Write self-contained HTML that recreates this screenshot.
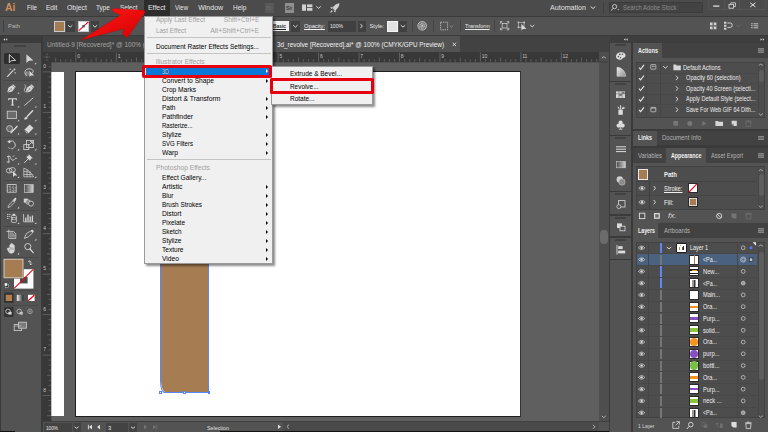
<!DOCTYPE html>
<html lang="en"><head><meta charset="utf-8"><title>Adobe Illustrator - Effect &gt; 3D &gt; Revolve</title>
<style>
html,body{margin:0;padding:0;background:#535353;}
body{width:768px;height:432px;overflow:hidden;position:relative;font-family:"Liberation Sans",sans-serif;}
#app{position:absolute;left:0;top:0;width:768px;height:432px;overflow:hidden;background:#535353;}
#app div{position:absolute;box-sizing:border-box;}
#app svg{position:absolute;left:0;top:0;}
.t{position:absolute;white-space:nowrap;}
</style></head><body><div id="app">
<div style="left:0px;top:0px;width:768px;height:16px;background:#4b4b4b;"></div>
<div style="left:0px;top:16px;width:768px;height:1px;background:#3a3a3a;"></div>
<div style="left:144px;top:0px;width:26px;height:16px;background:#2d2d2d;"></div>
<span class="t" style="top:0px;font-size:11px;line-height:14px;color:#cf8d5c;font-weight:bold;left:5.00px;transform-origin:0 50%;transform:scaleX(0.945);">Ai</span>
<span class="t" style="top:3px;font-size:7px;line-height:9px;color:#e4e4e4;left:26.80px;transform-origin:0 50%;transform:scaleX(0.887);">File</span>
<span class="t" style="top:3px;font-size:7px;line-height:9px;color:#e4e4e4;left:46.20px;transform-origin:0 50%;transform:scaleX(0.937);">Edit</span>
<span class="t" style="top:3px;font-size:7px;line-height:9px;color:#e4e4e4;left:67.00px;transform-origin:0 50%;transform:scaleX(0.979);">Object</span>
<span class="t" style="top:3px;font-size:7px;line-height:9px;color:#e4e4e4;left:96.20px;transform-origin:0 50%;transform:scaleX(0.909);">Type</span>
<span class="t" style="top:3px;font-size:7px;line-height:9px;color:#e4e4e4;left:120.00px;transform-origin:0 50%;transform:scaleX(0.900);">Select</span>
<span class="t" style="top:3px;font-size:7px;line-height:9px;color:#e4e4e4;left:147.50px;transform-origin:0 50%;transform:scaleX(0.985);">Effect</span>
<span class="t" style="top:3px;font-size:7px;line-height:9px;color:#e4e4e4;left:174.50px;transform-origin:0 50%;transform:scaleX(0.864);">View</span>
<span class="t" style="top:3px;font-size:7px;line-height:9px;color:#e4e4e4;left:198.20px;transform-origin:0 50%;">Window</span>
<span class="t" style="top:3px;font-size:7px;line-height:9px;color:#e4e4e4;left:233.20px;transform-origin:0 50%;transform:scaleX(0.924);">Help</span>
<div style="left:264.5px;top:3px;width:9px;height:9.5px;background:#585858;"></div>
<span class="t" style="top:4px;font-size:5.5px;line-height:8px;color:#6a6a6a;left:266.00px;transform-origin:0 50%;transform:scaleX(1.091);">Br</span>
<div style="left:284.5px;top:3px;width:9px;height:9.5px;background:#8e8e8e;"></div>
<span class="t" style="top:4px;font-size:5.5px;line-height:8px;color:#3c3c3c;font-weight:bold;left:286.00px;transform-origin:0 50%;transform:scaleX(1.091);">St</span>
<span class="t" style="top:3px;font-size:7px;line-height:9px;color:#e0e0e0;left:550.00px;transform-origin:0 50%;transform:scaleX(1.017);">Automation</span>
<div style="left:603px;top:3px;width:1px;height:10px;background:#3e3e3e;"></div>
<div style="left:608.5px;top:2px;width:94.5px;height:10.5px;background:#434343;border:1px solid #3c3c3c;border-radius:1px;"></div>
<span class="t" style="top:3px;font-size:6.5px;line-height:9px;color:#8c8c8c;left:623.00px;transform-origin:0 50%;transform:scaleX(0.908);">Search Adobe Stock</span>
<div style="left:0px;top:17px;width:768px;height:18px;background:#535353;"></div>
<div style="left:0px;top:35px;width:768px;height:1px;background:#3a3a3a;"></div>
<div style="left:3px;top:20px;width:1px;height:12px;background:#3f3f3f;"></div>
<span class="t" style="top:22px;font-size:6px;line-height:8px;color:#b8b8b8;left:8.00px;transform-origin:0 50%;transform:scaleX(0.972);">Path</span>
<div style="left:53.5px;top:21px;width:11px;height:10.5px;background:#a67c52;border:1px solid #c9c9c9;"></div>
<div style="left:66px;top:21px;width:8.5px;height:10.5px;background:#404040;"></div>
<div style="left:78px;top:21px;width:11px;height:10.5px;background:#fff;border:1px solid #c9c9c9;"></div>
<div style="left:91px;top:21px;width:8px;height:10.5px;background:#404040;"></div>
<div style="left:272px;top:21px;width:17px;height:10px;background:#f0f0f0;"></div>
<span class="t" style="top:22px;font-size:5.5px;line-height:8px;color:#222;font-weight:bold;left:273.00px;transform-origin:0 50%;transform:scaleX(0.886);text-decoration:underline;">Basic</span>
<div style="left:291px;top:20.5px;width:9px;height:11px;background:#404040;"></div>
<span class="t" style="top:22px;font-size:5.8px;line-height:8px;color:#f0f0f0;left:303.50px;transform-origin:0 50%;transform:scaleX(0.987);text-decoration:underline;">Opacity:</span>
<div style="left:328px;top:20.5px;width:28px;height:11px;background:#404040;"></div>
<span class="t" style="top:22px;font-size:5.8px;line-height:8px;color:#e8e8e8;left:330.00px;transform-origin:0 50%;transform:scaleX(0.876);">100%</span>
<div style="left:357.5px;top:20.5px;width:8px;height:11px;background:#404040;"></div>
<span class="t" style="top:22px;font-size:5.8px;line-height:8px;color:#e8e8e8;left:369.50px;transform-origin:0 50%;">Style:</span>
<div style="left:386.5px;top:21px;width:11.5px;height:10.5px;background:#e2e2e2;border:1px solid #f4f4f4;"></div>
<div style="left:399px;top:21px;width:8px;height:10.5px;background:#404040;"></div>
<div style="left:411.5px;top:20px;width:1px;height:12px;background:#444;"></div>
<div style="left:433px;top:20px;width:1px;height:12px;background:#444;"></div>
<div style="left:459.5px;top:20px;width:1px;height:12px;background:#444;"></div>
<span class="t" style="top:22px;font-size:5.8px;line-height:8px;color:#e8e8e8;left:464.80px;transform-origin:0 50%;transform:scaleX(0.942);text-decoration:underline;">Transform</span>
<div style="left:494px;top:20px;width:1px;height:12px;background:#444;"></div>
<div style="left:0px;top:36px;width:768px;height:16px;background:#424242;"></div>
<div style="left:0px;top:36px;width:41px;height:7px;background:#3c3c3c;"></div>
<div style="left:270px;top:36px;width:190px;height:16.5px;background:#535353;"></div>
<div style="left:42px;top:36px;width:1px;height:16px;background:#383838;"></div>
<span class="t" style="top:40px;font-size:6.5px;line-height:9px;color:#a2a2a2;left:47.00px;transform-origin:0 50%;">Untitled-9 [Recovered]* @ 100% (CMYK/GPU Preview)</span>
<span class="t" style="top:40px;font-size:6.5px;line-height:9px;color:#f2f2f2;left:276.50px;transform-origin:0 50%;transform:scaleX(0.979);">3d_revolve [Recovered].ai* @ 100% (CMYK/GPU Preview)</span>
<div style="left:0px;top:43px;width:41px;height:389px;background:#535353;"></div>
<div style="left:0px;top:36px;width:1px;height:396px;background:#3a3a3a;"></div>
<div style="left:41px;top:36px;width:1.5px;height:396px;background:#3a3a3a;"></div>
<div style="left:14px;top:44.6px;width:12px;height:2px;background:#424242;"></div>
<div style="left:4px;top:52.5px;width:15.5px;height:11.5px;background:#2e2e2e;border-radius:1.5px;"></div>
<div style="left:3px;top:80px;width:35px;height:0.8px;background:#484848;"></div>
<div style="left:3px;top:136.5px;width:35px;height:0.8px;background:#484848;"></div>
<div style="left:3px;top:180px;width:35px;height:0.8px;background:#484848;"></div>
<div style="left:3px;top:210px;width:35px;height:0.8px;background:#484848;"></div>
<div style="left:3px;top:226px;width:35px;height:0.8px;background:#484848;"></div>
<div style="left:3px;top:256.8px;width:35px;height:0.8px;background:#484848;"></div>
<div style="left:3px;top:290.3px;width:35px;height:0.8px;background:#484848;"></div>
<div style="left:3px;top:305px;width:35px;height:0.8px;background:#484848;"></div>
<div style="left:42.5px;top:52px;width:556.5px;height:10px;background:#383838;"></div>
<div style="left:42.5px;top:52px;width:8.5px;height:369px;background:#383838;"></div>
<div style="left:51px;top:62px;width:548px;height:359px;background:#5f5f5f;"></div>
<div style="left:50.8px;top:71.5px;width:13.2px;height:344.5px;background:#fff;"></div>
<div style="left:75.2px;top:71px;width:445.8px;height:345.5px;background:#fff;border:1px solid #1e1e1e;border-right-color:#333;"></div>
<div style="left:599px;top:52px;width:9.5px;height:369px;background:#4e4e4e;"></div>
<div style="left:600px;top:229.5px;width:8px;height:14px;background:#6c6c6c;border-radius:4px;"></div>
<div style="left:42.5px;top:421px;width:566px;height:11px;background:#535353;"></div>
<div style="left:42.5px;top:420.5px;width:566px;height:1px;background:#404040;"></div>
<div style="left:43.5px;top:422.5px;width:28.5px;height:9.5px;background:#434343;"></div>
<div style="left:72.8px;top:422.5px;width:8px;height:9.5px;background:#434343;"></div>
<div style="left:106px;top:422.5px;width:22px;height:9.5px;background:#434343;"></div>
<div style="left:129px;top:422.5px;width:8px;height:9.5px;background:#434343;"></div>
<span class="t" style="top:424px;font-size:5.8px;line-height:8px;color:#e8e8e8;left:46.00px;transform-origin:0 50%;transform:scaleX(0.809);">100%</span>
<span class="t" style="top:424px;font-size:5.8px;line-height:8px;color:#e8e8e8;left:108.00px;transform-origin:0 50%;">3</span>
<span class="t" style="top:424px;font-size:5.8px;line-height:8px;color:#e0e0e0;left:207.00px;transform-origin:0 50%;transform:scaleX(0.922);">Selection</span>
<div style="left:283px;top:422px;width:316px;height:9px;background:#4a4a4a;"></div>
<div style="left:220px;top:430.5px;width:548px;height:1.5px;background:#111;"></div>
<div style="left:0px;top:430.5px;width:15px;height:1.5px;background:#111;"></div>
<div style="left:160.8px;top:250px;width:48px;height:142.3px;background:#a67c52;border-radius:0 0 0 4.5px/0 0 0 12px;"></div>
<div style="left:160.2px;top:250px;width:49px;height:142.7px;background:transparent;border:0.7px solid #5585ff;border-radius:0 0 0 4.5px/0 0 0 12px;"></div>
<div style="left:159.20000000000002px;top:391.2px;width:2.6px;height:2.6px;background:#fff;border:0.6px solid #4f80ff;"></div>
<div style="left:183.4px;top:391.2px;width:2.6px;height:2.6px;background:#fff;border:0.6px solid #4f80ff;"></div>
<div style="left:207.70000000000002px;top:391.2px;width:2.6px;height:2.6px;background:#fff;border:0.6px solid #4f80ff;"></div>
<div style="left:608.5px;top:36px;width:159.5px;height:396px;background:#3a3a3a;"></div>
<div style="left:609px;top:36px;width:159px;height:6.5px;background:#3e3e3e;"></div>
<div style="left:610px;top:43px;width:21px;height:37.5px;background:#535353;"></div>
<div style="left:615px;top:44.3px;width:11px;height:2px;background:#414141;"></div>
<div style="left:610px;top:82px;width:21px;height:52.5px;background:#535353;"></div>
<div style="left:615px;top:83.3px;width:11px;height:2px;background:#414141;"></div>
<div style="left:610px;top:136px;width:21px;height:54.5px;background:#535353;"></div>
<div style="left:615px;top:137.3px;width:11px;height:2px;background:#414141;"></div>
<div style="left:610px;top:192px;width:21px;height:21.5px;background:#535353;"></div>
<div style="left:615px;top:193.3px;width:11px;height:2px;background:#414141;"></div>
<div style="left:610px;top:215.5px;width:21px;height:20.0px;background:#535353;"></div>
<div style="left:615px;top:216.8px;width:11px;height:2px;background:#414141;"></div>
<div style="left:610px;top:237.5px;width:21px;height:21.0px;background:#535353;"></div>
<div style="left:615px;top:238.8px;width:11px;height:2px;background:#414141;"></div>
<div style="left:610px;top:260px;width:21px;height:172px;background:#535353;"></div>
<div style="left:633px;top:43px;width:135px;height:14.5px;background:#424242;"></div>
<div style="left:633px;top:43px;width:29px;height:15px;background:#535353;"></div>
<span class="t" style="top:46px;font-size:6.5px;line-height:9px;color:#f0f0f0;font-weight:bold;left:637.50px;transform-origin:0 50%;transform:scaleX(0.839);">Actions</span>
<div style="left:633px;top:57.5px;width:135px;height:71.5px;background:#535353;"></div>
<div style="left:758px;top:48px;width:5.6px;height:4.6px;background:#858585;"></div>
<div style="left:758px;top:49.3px;width:5.6px;height:0.5px;background:#6a6a6a;"></div>
<div style="left:758px;top:50.9px;width:5.6px;height:0.5px;background:#6a6a6a;"></div>
<div style="left:633px;top:130.5px;width:135px;height:14.5px;background:#424242;"></div>
<div style="left:633px;top:130.5px;width:23.5px;height:15px;background:#535353;"></div>
<span class="t" style="top:133px;font-size:6.5px;line-height:9px;color:#f0f0f0;font-weight:bold;left:637.50px;transform-origin:0 50%;transform:scaleX(0.825);">Links</span>
<span class="t" style="top:133px;font-size:6.5px;line-height:9px;color:#b4b4b4;left:661.50px;transform-origin:0 50%;transform:scaleX(0.923);">Document Info</span>
<div style="left:758px;top:135.5px;width:5.6px;height:4.6px;background:#858585;"></div>
<div style="left:758px;top:136.8px;width:5.6px;height:0.5px;background:#6a6a6a;"></div>
<div style="left:758px;top:138.4px;width:5.6px;height:0.5px;background:#6a6a6a;"></div>
<div style="left:633px;top:148px;width:135px;height:14.5px;background:#424242;"></div>
<span class="t" style="top:151px;font-size:6.5px;line-height:9px;color:#b4b4b4;left:637.50px;transform-origin:0 50%;transform:scaleX(0.902);">Variables</span>
<div style="left:666px;top:148px;width:39.5px;height:15px;background:#535353;"></div>
<span class="t" style="top:151px;font-size:6.5px;line-height:9px;color:#f0f0f0;font-weight:bold;left:670.50px;transform-origin:0 50%;transform:scaleX(0.820);">Appearance</span>
<span class="t" style="top:151px;font-size:6.5px;line-height:9px;color:#b4b4b4;left:711.00px;transform-origin:0 50%;transform:scaleX(0.868);">Asset Export</span>
<div style="left:633px;top:162.5px;width:135px;height:60.0px;background:#535353;"></div>
<div style="left:758px;top:153px;width:5.6px;height:4.6px;background:#858585;"></div>
<div style="left:758px;top:154.3px;width:5.6px;height:0.5px;background:#6a6a6a;"></div>
<div style="left:758px;top:155.9px;width:5.6px;height:0.5px;background:#6a6a6a;"></div>
<div style="left:633px;top:223px;width:135px;height:14.5px;background:#424242;"></div>
<div style="left:633px;top:223px;width:24.5px;height:15px;background:#535353;"></div>
<span class="t" style="top:226px;font-size:6.5px;line-height:9px;color:#f0f0f0;font-weight:bold;left:637.50px;transform-origin:0 50%;transform:scaleX(0.811);">Layers</span>
<span class="t" style="top:226px;font-size:6.5px;line-height:9px;color:#b4b4b4;left:663.50px;transform-origin:0 50%;transform:scaleX(0.923);">Artboards</span>
<div style="left:633px;top:237.5px;width:135px;height:194.5px;background:#535353;"></div>
<div style="left:758px;top:228px;width:5.6px;height:4.6px;background:#858585;"></div>
<div style="left:758px;top:229.3px;width:5.6px;height:0.5px;background:#6a6a6a;"></div>
<div style="left:758px;top:230.9px;width:5.6px;height:0.5px;background:#6a6a6a;"></div>
<div style="left:636px;top:61.5px;width:128.5px;height:56px;background:#4d4d4d;border:1px solid #424242;"></div>
<div style="left:636px;top:72.5px;width:121px;height:0.8px;background:#484848;"></div>
<div style="left:636px;top:83.10000000000001px;width:121px;height:0.8px;background:#484848;"></div>
<div style="left:636px;top:93.7px;width:121px;height:0.8px;background:#484848;"></div>
<div style="left:636px;top:104.30000000000001px;width:121px;height:0.8px;background:#484848;"></div>
<div style="left:646.3px;top:61.5px;width:0.8px;height:56px;background:#454545;"></div>
<div style="left:659.5px;top:61.5px;width:0.8px;height:56px;background:#454545;"></div>
<div style="left:757.5px;top:61.5px;width:0.8px;height:56px;background:#454545;"></div>
<div style="left:758.5px;top:70px;width:5px;height:12px;background:#5e5e5e;border-radius:2.5px;"></div>
<span class="t" style="top:63px;font-size:6.3px;line-height:9px;color:#ececec;left:683.00px;transform-origin:0 50%;transform:scaleX(0.892);">Default Actions</span>
<span class="t" style="top:73px;font-size:6.3px;line-height:9px;color:#ececec;left:685.50px;transform-origin:0 50%;transform:scaleX(0.895);">Opacity 60 (selection)</span>
<span class="t" style="top:84px;font-size:6.3px;line-height:9px;color:#ececec;left:685.50px;transform-origin:0 50%;transform:scaleX(0.882);">Opacity 40 Screen (selecti...</span>
<span class="t" style="top:94px;font-size:6.3px;line-height:9px;color:#ececec;left:685.50px;transform-origin:0 50%;transform:scaleX(0.882);">Apply Default Style (select...</span>
<span class="t" style="top:105px;font-size:6.3px;line-height:9px;color:#ececec;left:685.50px;transform-origin:0 50%;transform:scaleX(0.876);">Save For Web GIF 64 Dith...</span>
<div style="left:636px;top:166px;width:128.5px;height:43.5px;background:#4d4d4d;border:1px solid #424242;"></div>
<div style="left:636px;top:181px;width:121px;height:0.8px;background:#454545;"></div>
<div style="left:636px;top:195px;width:121px;height:0.8px;background:#454545;"></div>
<div style="left:757.5px;top:166px;width:0.8px;height:43.5px;background:#454545;"></div>
<div style="left:758.5px;top:174px;width:5px;height:22px;background:#5e5e5e;border-radius:2.5px;"></div>
<div style="left:649.3px;top:182px;width:0.8px;height:27px;background:#3e3e3e;"></div>
<div style="left:637.5px;top:169px;width:10.5px;height:10.5px;background:#a67c52;border:1px solid #e8e8e8;"></div>
<span class="t" style="top:170px;font-size:6.3px;line-height:9px;color:#f0f0f0;font-weight:bold;left:664.00px;transform-origin:0 50%;transform:scaleX(0.952);">Path</span>
<span class="t" style="top:184px;font-size:6.3px;line-height:9px;color:#f0f0f0;left:663.50px;transform-origin:0 50%;transform:scaleX(0.927);text-decoration:underline;">Stroke:</span>
<span class="t" style="top:198px;font-size:6.3px;line-height:9px;color:#f0f0f0;left:663.50px;transform-origin:0 50%;transform:scaleX(0.970);">Fill:</span>
<span class="t" style="top:211px;font-size:7px;line-height:9px;color:#dcdcdc;left:668.00px;transform-origin:0 50%;transform:scaleX(1.150);font-style:italic;">fx.</span>
<div style="left:688px;top:183px;width:9.5px;height:10px;background:#fff;border:1px solid #2a2a2a;"></div>
<div style="left:688px;top:197px;width:9.5px;height:10px;background:#a67c52;border:1px solid #2a2a2a;box-shadow:inset 0 0 0 1px #d9d9d9;"></div>
<div style="left:636px;top:241.7px;width:128.5px;height:176.5px;background:#4d4d4d;border:1px solid #424242;"></div>
<div style="left:636.5px;top:253.48px;width:120.5px;height:11.78px;background:#4a6180;"></div>
<div style="left:636px;top:253.48px;width:121px;height:0.8px;background:#484848;"></div>
<div style="left:636px;top:265.26px;width:121px;height:0.8px;background:#484848;"></div>
<div style="left:636px;top:277.03999999999996px;width:121px;height:0.8px;background:#484848;"></div>
<div style="left:636px;top:288.82px;width:121px;height:0.8px;background:#484848;"></div>
<div style="left:636px;top:300.59999999999997px;width:121px;height:0.8px;background:#484848;"></div>
<div style="left:636px;top:312.38px;width:121px;height:0.8px;background:#484848;"></div>
<div style="left:636px;top:324.15999999999997px;width:121px;height:0.8px;background:#484848;"></div>
<div style="left:636px;top:335.94px;width:121px;height:0.8px;background:#484848;"></div>
<div style="left:636px;top:347.71999999999997px;width:121px;height:0.8px;background:#484848;"></div>
<div style="left:636px;top:359.5px;width:121px;height:0.8px;background:#484848;"></div>
<div style="left:636px;top:371.28px;width:121px;height:0.8px;background:#484848;"></div>
<div style="left:636px;top:383.05999999999995px;width:121px;height:0.8px;background:#484848;"></div>
<div style="left:636px;top:394.84px;width:121px;height:0.8px;background:#484848;"></div>
<div style="left:636px;top:406.62px;width:121px;height:0.8px;background:#484848;"></div>
<div style="left:647.5px;top:241.7px;width:0.8px;height:176.5px;background:#454545;"></div>
<div style="left:737.3px;top:241.7px;width:0.8px;height:176.5px;background:#454545;"></div>
<div style="left:757.5px;top:241.7px;width:0.8px;height:176.5px;background:#454545;"></div>
<div style="left:758.5px;top:252px;width:5px;height:128px;background:#5e5e5e;border-radius:2.5px;"></div>
<div style="left:660.3px;top:242.89999999999998px;width:1.6px;height:10.18px;background:#5f86f2;"></div>
<div style="left:676px;top:242.78999999999996px;width:10.5px;height:10px;background:#fff;border:1px solid #1e1e1e;border-radius:1px;"></div>
<div style="left:679px;top:246.78999999999996px;width:1px;height:3px;background:#c98a4a;"></div>
<div style="left:681.5px;top:247.28999999999996px;width:1.2px;height:3px;background:#555;"></div>
<div style="left:683.2px;top:246.28999999999996px;width:1.2px;height:4px;background:#333;"></div>
<div style="left:680px;top:245.18999999999997px;width:1px;height:1px;background:#e0a030;"></div>
<span class="t" style="top:243px;font-size:6.3px;line-height:9px;color:#f0f0f0;left:689.50px;transform-origin:0 50%;transform:scaleX(0.857);">Layer 1</span>
<div style="left:660.3px;top:254.68px;width:1.6px;height:10.18px;background:#767676;"></div>
<div style="left:689.3px;top:254.57px;width:10px;height:10px;background:#fff;border:0.8px solid #2a2a2a;"></div>
<span class="t" style="top:255px;font-size:6.3px;line-height:9px;color:#f0f0f0;left:702.50px;transform-origin:0 50%;transform:scaleX(0.842);">&lt;Pa...</span>
<div style="left:693.6999999999999px;top:255.37px;width:1.1px;height:8.4px;background:#a67c52;"></div>
<div style="left:660.3px;top:266.46px;width:1.6px;height:10.18px;background:#5f86f2;"></div>
<div style="left:689.3px;top:266.34999999999997px;width:10px;height:10px;background:#fff;border:0.8px solid #2a2a2a;"></div>
<span class="t" style="top:267px;font-size:6.3px;line-height:9px;color:#f0f0f0;left:702.50px;transform-origin:0 50%;transform:scaleX(0.914);">New...</span>
<div style="left:690.0999999999999px;top:268.75px;width:8.4px;height:2px;background:#1a1a1a;"></div>
<div style="left:690.0999999999999px;top:272.54999999999995px;width:8.4px;height:1.6px;background:#1a1a1a;"></div>
<div style="left:691.5999999999999px;top:269.75px;width:5px;height:1px;background:#e0a030;"></div>
<div style="left:660.3px;top:278.23999999999995px;width:1.6px;height:10.18px;background:#5f86f2;"></div>
<div style="left:689.3px;top:278.12999999999994px;width:10px;height:10px;background:#fff;border:0.8px solid #2a2a2a;"></div>
<span class="t" style="top:279px;font-size:6.3px;line-height:9px;color:#f0f0f0;left:702.50px;transform-origin:0 50%;transform:scaleX(0.842);">&lt;Pa...</span>
<div style="left:692.0999999999999px;top:279.92999999999995px;width:4.4px;height:7.4px;background:#9a9a9a;"></div>
<div style="left:693.4999999999999px;top:279.92999999999995px;width:1.4px;height:7.4px;background:#333;"></div>
<div style="left:660.3px;top:290.02px;width:1.6px;height:10.18px;background:#767676;"></div>
<div style="left:689.3px;top:289.90999999999997px;width:10px;height:10px;background:#fff;border:0.8px solid #2a2a2a;"></div>
<span class="t" style="top:290px;font-size:6.3px;line-height:9px;color:#f0f0f0;left:702.50px;transform-origin:0 50%;transform:scaleX(0.899);">Main...</span>
<div style="left:660.3px;top:301.79999999999995px;width:1.6px;height:10.18px;background:#767676;"></div>
<div style="left:689.3px;top:301.68999999999994px;width:10px;height:10px;background:#fff;border:0.8px solid #2a2a2a;"></div>
<span class="t" style="top:302px;font-size:6.3px;line-height:9px;color:#f0f0f0;left:702.50px;transform-origin:0 50%;transform:scaleX(0.889);">Ora...</span>
<div style="left:690.0999999999999px;top:305.68999999999994px;width:8.4px;height:2.2px;background:#f7931e;"></div>
<div style="left:660.3px;top:313.58px;width:1.6px;height:10.18px;background:#767676;"></div>
<div style="left:689.3px;top:313.46999999999997px;width:10px;height:10px;background:#fff;border:0.8px solid #2a2a2a;"></div>
<span class="t" style="top:314px;font-size:6.3px;line-height:9px;color:#f0f0f0;left:702.50px;transform-origin:0 50%;transform:scaleX(0.889);">Purp...</span>
<div style="left:690.0999999999999px;top:317.46999999999997px;width:8.4px;height:2.2px;background:#8a4fbf;"></div>
<div style="left:660.3px;top:325.35999999999996px;width:1.6px;height:10.18px;background:#767676;"></div>
<div style="left:689.3px;top:325.24999999999994px;width:10px;height:10px;background:#fff;border:0.8px solid #2a2a2a;"></div>
<span class="t" style="top:326px;font-size:6.3px;line-height:9px;color:#f0f0f0;left:702.50px;transform-origin:0 50%;transform:scaleX(0.906);">solid...</span>
<div style="left:690.0999999999999px;top:328.24999999999994px;width:8.4px;height:4px;background:#8cc63f;"></div>
<div style="left:660.3px;top:337.14px;width:1.6px;height:10.18px;background:#767676;"></div>
<div style="left:689.3px;top:337.03px;width:10px;height:10px;background:#fff;border:0.8px solid #2a2a2a;"></div>
<span class="t" style="top:337px;font-size:6.3px;line-height:9px;color:#f0f0f0;left:702.50px;transform-origin:0 50%;transform:scaleX(0.889);">Ora...</span>
<div style="left:690.0999999999999px;top:337.83px;width:8.4px;height:8.4px;background:#f7931e;border-radius:4px;"></div>
<div style="left:660.3px;top:348.91999999999996px;width:1.6px;height:10.18px;background:#767676;"></div>
<div style="left:689.3px;top:348.80999999999995px;width:10px;height:10px;background:#fff;border:0.8px solid #2a2a2a;"></div>
<span class="t" style="top:349px;font-size:6.3px;line-height:9px;color:#f0f0f0;left:702.50px;transform-origin:0 50%;transform:scaleX(0.924);">purp...</span>
<div style="left:690.0999999999999px;top:349.60999999999996px;width:8.4px;height:8.4px;background:#8a4fbf;border-radius:4px;"></div>
<div style="left:660.3px;top:360.7px;width:1.6px;height:10.18px;background:#767676;"></div>
<div style="left:689.3px;top:360.59px;width:10px;height:10px;background:#fff;border:0.8px solid #2a2a2a;"></div>
<span class="t" style="top:361px;font-size:6.3px;line-height:9px;color:#f0f0f0;left:702.50px;transform-origin:0 50%;transform:scaleX(0.962);">bottl...</span>
<div style="left:690.0999999999999px;top:361.39px;width:8.4px;height:8.4px;background:#7ac143;border-radius:4px;"></div>
<div style="left:660.3px;top:372.47999999999996px;width:1.6px;height:10.18px;background:#767676;"></div>
<div style="left:689.3px;top:372.36999999999995px;width:10px;height:10px;background:#fff;border:0.8px solid #2a2a2a;"></div>
<span class="t" style="top:373px;font-size:6.3px;line-height:9px;color:#f0f0f0;left:702.50px;transform-origin:0 50%;transform:scaleX(0.889);">Ora...</span>
<div style="left:690.0999999999999px;top:376.36999999999995px;width:8.4px;height:2.2px;background:#f7931e;"></div>
<div style="left:660.3px;top:384.25999999999993px;width:1.6px;height:10.18px;background:#767676;"></div>
<div style="left:689.3px;top:384.1499999999999px;width:10px;height:10px;background:#fff;border:0.8px solid #2a2a2a;"></div>
<span class="t" style="top:385px;font-size:6.3px;line-height:9px;color:#f0f0f0;left:702.50px;transform-origin:0 50%;transform:scaleX(0.889);">Purp...</span>
<div style="left:690.0999999999999px;top:388.1499999999999px;width:8.4px;height:2.2px;background:#8a4fbf;"></div>
<div style="left:660.3px;top:396.03999999999996px;width:1.6px;height:10.18px;background:#767676;"></div>
<div style="left:689.3px;top:395.92999999999995px;width:10px;height:10px;background:#fff;border:0.8px solid #2a2a2a;"></div>
<span class="t" style="top:396px;font-size:6.3px;line-height:9px;color:#f0f0f0;left:702.50px;transform-origin:0 50%;transform:scaleX(0.911);">neck ...</span>
<div style="left:690.0999999999999px;top:398.92999999999995px;width:8.4px;height:4px;background:#8cc63f;"></div>
<div style="left:660.3px;top:407.82px;width:1.6px;height:10.18px;background:#767676;"></div>
<div style="left:689.3px;top:407.71px;width:10px;height:10px;background:#fff;border:0.8px solid #2a2a2a;"></div>
<span class="t" style="top:408px;font-size:6.3px;line-height:9px;color:#f0f0f0;left:702.50px;transform-origin:0 50%;transform:scaleX(0.842);">&lt;Pa...</span>
<div style="left:692.0999999999999px;top:409.51px;width:4.4px;height:7.4px;background:#9a9a9a;"></div>
<div style="left:693.4999999999999px;top:409.51px;width:1.4px;height:7.4px;background:#333;"></div>
<span class="t" style="top:422px;font-size:6px;line-height:8px;color:#d8d8d8;left:637.50px;transform-origin:0 50%;transform:scaleX(0.825);">1 Layer</span>
<span class="t" style="top:52px;font-size:5px;line-height:8px;color:#c4c4c4;left:77.20px;transform-origin:0 50%;">0</span>
<span class="t" style="top:52px;font-size:5px;line-height:8px;color:#c4c4c4;left:117.65px;transform-origin:0 50%;">1</span>
<span class="t" style="top:52px;font-size:5px;line-height:8px;color:#c4c4c4;left:158.10px;transform-origin:0 50%;">2</span>
<span class="t" style="top:52px;font-size:5px;line-height:8px;color:#c4c4c4;left:198.55px;transform-origin:0 50%;">3</span>
<span class="t" style="top:52px;font-size:5px;line-height:8px;color:#c4c4c4;left:239.00px;transform-origin:0 50%;">4</span>
<span class="t" style="top:52px;font-size:5px;line-height:8px;color:#c4c4c4;left:279.45px;transform-origin:0 50%;">5</span>
<span class="t" style="top:52px;font-size:5px;line-height:8px;color:#c4c4c4;left:319.90px;transform-origin:0 50%;">6</span>
<span class="t" style="top:52px;font-size:5px;line-height:8px;color:#c4c4c4;left:360.35px;transform-origin:0 50%;">7</span>
<span class="t" style="top:52px;font-size:5px;line-height:8px;color:#c4c4c4;left:400.80px;transform-origin:0 50%;">8</span>
<span class="t" style="top:52px;font-size:5px;line-height:8px;color:#c4c4c4;left:441.25px;transform-origin:0 50%;">9</span>
<span class="t" style="top:52px;font-size:5px;line-height:8px;color:#c4c4c4;left:481.70px;transform-origin:0 50%;">10</span>
<span class="t" style="top:52px;font-size:5px;line-height:8px;color:#c4c4c4;left:522.15px;transform-origin:0 50%;">11</span>
<span class="t" style="top:52px;font-size:5px;line-height:8px;color:#c4c4c4;left:562.60px;transform-origin:0 50%;">12</span>
<span class="t" style="top:62px;font-size:5px;line-height:8px;color:#c4c4c4;left:43.20px;transform-origin:0 50%;">0</span>
<span class="t" style="top:102px;font-size:5px;line-height:8px;color:#c4c4c4;left:43.20px;transform-origin:0 50%;">1</span>
<span class="t" style="top:143px;font-size:5px;line-height:8px;color:#c4c4c4;left:43.20px;transform-origin:0 50%;">2</span>
<span class="t" style="top:183px;font-size:5px;line-height:8px;color:#c4c4c4;left:43.20px;transform-origin:0 50%;">3</span>
<span class="t" style="top:224px;font-size:5px;line-height:8px;color:#c4c4c4;left:43.20px;transform-origin:0 50%;">4</span>
<span class="t" style="top:264px;font-size:5px;line-height:8px;color:#c4c4c4;left:43.20px;transform-origin:0 50%;">5</span>
<span class="t" style="top:305px;font-size:5px;line-height:8px;color:#c4c4c4;left:43.20px;transform-origin:0 50%;">6</span>
<span class="t" style="top:345px;font-size:5px;line-height:8px;color:#c4c4c4;left:43.20px;transform-origin:0 50%;">7</span>
<span class="t" style="top:386px;font-size:5px;line-height:8px;color:#c4c4c4;left:43.20px;transform-origin:0 50%;">8</span>
<svg width="768" height="432" viewBox="0 0 768 432" fill="none" stroke="none"><path d="M5 38.200v2.600l-1.500-1.300zM7.200 38.200v2.600l-1.500-1.300z" fill="#e0e0e0"/>
<path d="M9.3 54.6L9.3 62.6L11.6 60.6L15.6 60.4Z" fill="none" stroke="#e0e0e0" stroke-width="0.9" stroke-linejoin="round"/>
<path d="M26.4 54.2L26.4 63L29 60.8L33.4 60.6Z" fill="#d4d4d4"/>
<path d="M36.2 64.2l-1.8 0l1.8 -1.8z" fill="#d6d6d6"/>
<path d="M7.6 76.4L13 70.6" stroke="#d6d6d6" stroke-width="1.2" stroke-linecap="round"/>
<path d="M14.4 68.2v2.4M13.2 69.4h2.4M10.2 68.6v1.4M9.5 69.3h1.4M15.2 72.2v1.4M14.5 72.9h1.4" stroke="#d6d6d6" stroke-width="0.6"/>
<path d="M26.2 75.6C23.4 72 25.6 68.6 29.4 68.8C33 69 34.4 71.6 32 73.4" stroke="#d6d6d6" stroke-width="0.9" fill="none"/>
<path d="M26.6 71.6c0.2 2 0.2 3.4-0.6 4.8M28 71.2c0.2 2 0.2 3-0.2 4.4" stroke="#d6d6d6" stroke-width="0.6" fill="none"/>
<path d="M29.4 70.8L29.4 77L31 75.4L34.2 75.4Z" fill="#d8d8d8"/>
<g transform="translate(7.4 84.6)" ><path d="M0 7.2L1 3.2L4.6 0.6L7.4 3.4L4.8 7L0.8 8Z" fill="#d6d6d6"/><path d="M5.2 0L8 2.8" stroke="#d6d6d6" stroke-width="1.3"/><path d="M0.6 7.6L3.6 4.6" stroke="#535353" stroke-width="0.6"/><circle cx="3.9" cy="4.2" r="0.6" fill="#535353"/></g>
<path d="M19.2 93.8l-1.8 0l1.8 -1.8z" fill="#d6d6d6"/>
<g transform="translate(25.8 84.6)" ><path d="M0 7.2L1 3.2L4.6 0.6L7.4 3.4L4.8 7L0.8 8Z" fill="#d6d6d6"/><path d="M5.2 0L8 2.8" stroke="#d6d6d6" stroke-width="1.3"/><path d="M0.6 7.6L3.6 4.6" stroke="#535353" stroke-width="0.6"/><circle cx="3.9" cy="4.2" r="0.6" fill="#535353"/></g>
<path d="M24.4 84.6c1.6 0.6 1.6 2 0.6 3.4c-1 1.6-1 3.4 0.8 4.2" stroke="#d6d6d6" stroke-width="0.7" fill="none"/>
<path d="M8.2 98.2h8.6v2h-0.8l-0.4-1h-2.4v5.4l1 0.3v0.7h-3.4v-0.7l1-0.3v-5.4h-2.4l-0.4 1h-0.8z" fill="#dcdcdc"/>
<path d="M19.2 107.6l-1.8 0l1.8 -1.8z" fill="#d6d6d6"/>
<path d="M24.6 105.4L33 98" stroke="#d6d6d6" stroke-width="0.9" stroke-linecap="round"/>
<path d="M36.4 107.6l-1.8 0l1.8 -1.8z" fill="#d6d6d6"/>
<rect x="7.2" y="111.2" width="9.2" height="7.4" fill="#6b6b6b" stroke="#d0d0d0" stroke-width="0.8"/>
<path d="M19.2 121.2l-1.8 0l1.8 -1.8z" fill="#d6d6d6"/>
<path d="M24.2 119.4c0.2-1.8 1.2-2.8 2.4-2.6l1 1c0 1.4-1.400 2-3.400 1.600z" fill="#d6d6d6"/><path d="M27.4 116.2L32.600 110.800" stroke="#d6d6d6" stroke-width="1.5" stroke-linecap="round"/>
<path d="M36.4 121.2l-1.8 0l1.8 -1.8z" fill="#d6d6d6"/>
<circle cx="9.6" cy="128.6" r="3" fill="#6b6b6b" stroke="#d0d0d0" stroke-width="0.8"/><path d="M11.2 132.6L17 126.4" stroke="#d6d6d6" stroke-width="1.5" stroke-linecap="round"/>
<path d="M19.2 134.6l-1.8 0l1.8 -1.8z" fill="#d6d6d6"/>
<path d="M24.4 129.8L29.6 124.6L33.6 128L28.600 133.200L26.600 133.200Z" fill="#d8d8d8"/><path d="M25.2 130.4L28.200 133" stroke="#535353" stroke-width="0.7"/>
<path d="M36.4 134.6l-1.8 0l1.8 -1.8z" fill="#d6d6d6"/>
<path d="M9.6 141.4A3.9 3.9 0 1 1 8 146.8" stroke="#d6d6d6" stroke-width="0.9" fill="none" stroke-dasharray="14 0.8 1 0.8 1 0.8 1 0.8"/><path d="M7.2 141.8L10.200 139.800L10.200 143.400Z" fill="#d6d6d6"/>
<path d="M19.2 150.4l-1.8 0l1.8 -1.8z" fill="#d6d6d6"/>
<rect x="23.800" y="144.600" width="5" height="5" fill="none" stroke="#d6d6d6" stroke-width="0.8"/><rect x="26.400" y="140.400" width="7.200" height="7" fill="none" stroke="#d6d6d6" stroke-width="0.8"/><path d="M28 146L32.200 141.800M30 141.600h2.400v2.400" stroke="#d6d6d6" stroke-width="0.8" fill="none"/>
<path d="M36.4 150.4l-1.8 0l1.8 -1.8z" fill="#d6d6d6"/>
<path d="M6.8 162C8.8 162.600 9.400 160 8.200 157.400C7.600 155.400 10.200 155.600 10.600 157.800C11 160 13.200 161 14.400 159.400C15.400 158 16.400 157.800 17 158.800" stroke="#d6d6d6" stroke-width="1" fill="none"/><path d="M7 156.600l2.600-0.400M12.600 157l1.600-1.600M8 163l2-1.600" stroke="#d6d6d6" stroke-width="0.8"/>
<path d="M19.2 164.6l-1.8 0l1.8 -1.8z" fill="#d6d6d6"/>
<path d="M28.800 154.200L32.800 158.200L31.200 158.600L30 160.800L26.200 157L28.400 155.800Z" fill="#d8d8d8"/><path d="M28 159L24.400 162.800" stroke="#d6d6d6" stroke-width="0.9" stroke-linecap="round"/>
<path d="M36.4 164.6l-1.8 0l1.8 -1.8z" fill="#d6d6d6"/>
<ellipse cx="9.200" cy="170.600" rx="2.800" ry="2.400" fill="none" stroke="#d6d6d6" stroke-width="0.8"/><ellipse cx="12.400" cy="170" rx="3" ry="2.400" fill="none" stroke="#d6d6d6" stroke-width="0.8"/><path d="M13 171L13 177L14.600 175.600L17.400 175.600Z" fill="#d8d8d8"/>
<path d="M19.2 178l-1.8 0l1.8 -1.8z" fill="#d6d6d6"/>
<path d="M23.800 168.200V176.800H33.800M23.800 168.200C28 169.400 31.200 172.600 33.800 176.800M23.800 171.400L30.200 172.200M23.800 174.400L32.400 174.600M27 169.400V176.800M30 171.600V176.800" stroke="#d6d6d6" stroke-width="0.7" fill="none"/>
<path d="M36.4 178l-1.8 0l1.8 -1.8z" fill="#d6d6d6"/>
<rect x="7.200" y="184.600" width="9" height="7.600" fill="none" stroke="#d6d6d6" stroke-width="0.8"/><path d="M7.200 187.200C10 186 13 189 16.200 187.600M7.200 190C10 188.800 13 191.400 16.200 190M10 184.600C9.400 187 11 190 10.200 192.200M13.200 184.600C12.600 187 14.200 190 13.400 192.200" stroke="#d6d6d6" stroke-width="0.6" fill="none" stroke-dasharray="1 0.6"/>
<defs><linearGradient id="tg" x1="0" x2="1" y1="0" y2="0"><stop offset="0" stop-color="#4a4a4a"/><stop offset="1" stop-color="#d0d0d0"/></linearGradient><linearGradient id="tg2" x1="0" x2="1" y1="0" y2="0"><stop offset="0" stop-color="#f4f4f4"/><stop offset="1" stop-color="#2a2a2a"/></linearGradient></defs>
<rect x="24.400" y="184.600" width="8.800" height="7.800" fill="url(#tg)" stroke="#c8c8c8" stroke-width="0.7"/>
<path d="M8 207.400L8.400 205.600L13 200.600L14.600 202.200L9.800 207Z" fill="none" stroke="#d6d6d6" stroke-width="0.8"/><path d="M12.600 200.200L15.400 197.600L16.600 198.800L14.800 202Z" fill="#d6d6d6"/>
<path d="M19.2 208.4l-1.8 0l1.8 -1.8z" fill="#d6d6d6"/>
<rect x="23.800" y="198.600" width="4" height="4" fill="#d6d6d6"/><circle cx="28" cy="202" r="2.300" fill="#8a8a8a" stroke="#d6d6d6" stroke-width="0.6"/><circle cx="31" cy="203.600" r="2.500" fill="#535353" stroke="#d6d6d6" stroke-width="0.8"/>
<rect x="11.400" y="215.600" width="5" height="6.800" rx="0.800" fill="none" stroke="#d6d6d6" stroke-width="0.8"/><rect x="12.600" y="213.800" width="2.600" height="1.800" fill="#d6d6d6"/><rect x="12.600" y="217.400" width="2.600" height="2.400" fill="none" stroke="#d6d6d6" stroke-width="0.6"/><path d="M7 214.400h1.400M9.200 214.400h1.400M7 216.400h1.400M7 218.400h1.400M9.200 216.400h1" stroke="#d6d6d6" stroke-width="0.9"/>
<path d="M19.2 224l-1.8 0l1.8 -1.8z" fill="#d6d6d6"/>
<path d="M23.600 214V221.800H33.600" stroke="#d6d6d6" stroke-width="0.8" fill="none"/><path d="M25.800 221.400V217.400M28 221.400V214.600M30.200 221.400V216.600M32.400 221.400V215.600" stroke="#d6d6d6" stroke-width="1.3"/>
<path d="M36.4 224l-1.8 0l1.8 -1.8z" fill="#d6d6d6"/>
<path d="M8.800 229.600V238.400H15.800V233.600L13.400 231.400H6.400" stroke="#d6d6d6" stroke-width="0.8" fill="none"/><path d="M9.600 232.200H13L15 234.200V237.600H9.600Z" fill="#8a8a8a"/>
<path d="M24.400 238.400L26.400 233.600L31.800 230.400L33.200 232.200L28.400 236.800Z" fill="none" stroke="#d6d6d6" stroke-width="0.8" stroke-linejoin="round"/><path d="M30.600 231L32.600 229.600L33.800 231.400L32.400 232.800Z" fill="#d6d6d6"/>
<path d="M36.4 240.4l-1.8 0l1.8 -1.8z" fill="#d6d6d6"/>
<path d="M8.200 248l1.500 1.400V245.200q0.550-0.900 1.100 0V250M10.800 247V243.800q0.600-0.900 1.200 0V249M12 247V244.200q0.600-0.900 1.200 0V249.500M13.200 247.500V245.400q0.600-0.900 1.200 0.200V250.200q0 2.600-2.200 3h-1.600q-1.400-0.200-2.200-1.800L7.200 248.800q0.200-1 1-0.800Z" fill="#d8d8d8" stroke="#d8d8d8" stroke-width="0.5" stroke-linejoin="round"/><path d="M9.700 249.400v2M10.800 247.200v2.600M12 247.200v2.600M13.200 247.800v2.200" stroke="#535353" stroke-width="0.350"/>
<path d="M19.2 254.4l-1.8 0l1.8 -1.8z" fill="#d6d6d6"/>
<circle cx="27.800" cy="246.600" r="3.100" fill="none" stroke="#d6d6d6" stroke-width="0.9"/><path d="M30 249L33.200 252.600" stroke="#d6d6d6" stroke-width="1.300" stroke-linecap="round"/>
<rect x="14" y="269.200" width="19.400" height="19.400" fill="#fff"/><rect x="20" y="277" width="7.600" height="6.400" fill="#4a4a4a"/><path d="M14.200 288.400L33.200 269.400" stroke="#f00014" stroke-width="1.100"/>
<rect x="3.200" y="258.400" width="20.600" height="20.200" fill="#535353"/><rect x="4" y="259.200" width="19" height="18.600" fill="#a67c52" stroke="#e6dccf" stroke-width="0.8"/>
<path d="M28.600 261.400h2.200v3.600M29.800 260.200l-1.400 1.200l1.400 1.200M29.600 263.600l1.200 1.400l1.200-1.400" stroke="#d6d6d6" stroke-width="0.7" fill="none"/>
<rect x="5.600" y="284.200" width="3" height="3" fill="#222" stroke="#ddd" stroke-width="0.5"/><rect x="4.400" y="283" width="3" height="3" fill="#fff" stroke="#333" stroke-width="0.4"/>
<rect x="4" y="292.600" width="9.600" height="10.400" rx="1" fill="#333"/><rect x="5.800" y="294.800" width="6.200" height="6.200" fill="#b08050"/>
<rect x="16.800" y="294.800" width="6.600" height="6.200" fill="url(#tg2)"/>
<rect x="28" y="294.800" width="6.600" height="6.200" fill="#fff"/><path d="M28.200 300.800L34.400 295" stroke="#f00014" stroke-width="1.200"/>
<rect x="4" y="307" width="9.600" height="10" rx="1" fill="#333"/>
<circle cx="8.0" cy="311.400" r="2.300" fill="none" stroke="#d6d6d6" stroke-width="0.8"/>
<circle cx="19.2" cy="311.400" r="2.300" fill="none" stroke="#c4c4c4" stroke-width="0.8"/>
<circle cx="30.0" cy="311.400" r="2.300" fill="none" stroke="#a8a8a8" stroke-width="0.8"/>
<rect x="8.400" y="311.800" width="3.200" height="2.800" fill="#d6d6d6"/><rect x="19.600" y="311.800" width="3.200" height="2.800" fill="#c4c4c4"/><path d="M30 309.600v3.400M28.600 311.400h2.800" stroke="#a8a8a8" stroke-width="0.6"/>
<rect x="15" y="307" width="21.500" height="10" fill="none" stroke="#5a5a5a" stroke-width="0.5"/><path d="M26 307v10" stroke="#5a5a5a" stroke-width="0.5"/>
<rect x="14.200" y="324.600" width="7.400" height="6" fill="#535353" stroke="#d0d0d0" stroke-width="0.8"/><rect x="18.600" y="322.200" width="7.800" height="6" fill="#7a7a7a" stroke="#d0d0d0" stroke-width="0.8"/><path d="M14.200 326h7.400" stroke="#d0d0d0" stroke-width="0.6"/>
<rect x="302" y="4.4" width="4" height="6.4" fill="#cfcfcf"/><rect x="307" y="4.4" width="5.4" height="2.8" fill="#cfcfcf"/><rect x="307" y="8" width="5.4" height="2.800" fill="#cfcfcf"/>
<path d="M316.70000000000005 6.65L318.6 8.35L320.5 6.65" stroke="#e6e6e6" stroke-width="0.9" fill="none" stroke-linecap="round" stroke-linejoin="round"/>
<path d="M339.4 3.200C336.400 3.400 334 5.400 332.600 8.200L334.800 10.400C337.600 9 339.400 6.400 339.400 3.200Z" fill="#d0d0d0"/><path d="M332.800 7L330.600 7.600L332 9M335.600 10L335.200 12.200L333.800 10.800M331.800 10.200L330.400 12.400L332.800 11.200" fill="#d0d0d0" stroke="#d0d0d0" stroke-width="0.5"/>
<path d="M591 6.85L593 8.549999999999999L595 6.85" stroke="#e6e6e6" stroke-width="0.9" fill="none" stroke-linecap="round" stroke-linejoin="round"/>
<circle cx="614.600" cy="6.600" r="2.100" stroke="#cfcfcf" stroke-width="0.9"/><path d="M613 8.400L611.200 10.600" stroke="#cfcfcf" stroke-width="1"/><path d="M617.400 9.200l1 1l1-1z" fill="#cfcfcf"/>
<path d="M708.800 0V8.600Q708.800 9.400 709.600 9.400H765Q765.800 9.400 765.800 8.600V0M724.300 0V9.400M739.600 0V9.400" stroke="#5e5e5e" stroke-width="0.6"/>
<path d="M713.200 6.100H719.300" stroke="#e0e0e0" stroke-width="1.300"/>
<rect x="729" y="4.400" width="4.400" height="3.800" stroke="#e0e0e0" stroke-width="0.8" fill="#4b4b4b"/><path d="M730.800 4.200V2.800H735.400V6.600H733.600" stroke="#e0e0e0" stroke-width="0.8"/>
<path d="M750.200 2.800L755.400 7M755.400 2.800L750.200 7" stroke="#e8e8e8" stroke-width="1"/>
<path d="M68.3 25.45L70.2 27.15L72.10000000000001 25.45" stroke="#e6e6e6" stroke-width="0.9" fill="none" stroke-linecap="round" stroke-linejoin="round"/>
<path d="M78.800 30.600L88.400 21.800" stroke="#f00014" stroke-width="1.100"/><rect x="82.400" y="25" width="2.400" height="2.400" fill="#555"/>
<path d="M93.1 25.45L95 27.15L96.9 25.45" stroke="#e6e6e6" stroke-width="0.9" fill="none" stroke-linecap="round" stroke-linejoin="round"/>
<path d="M293.5 25.45L295.4 27.15L297.29999999999995 25.45" stroke="#e6e6e6" stroke-width="0.9" fill="none" stroke-linecap="round" stroke-linejoin="round"/>
<path d="M360.65 24.1L362.34999999999997 26L360.65 27.9" stroke="#e6e6e6" stroke-width="0.9" fill="none" stroke-linecap="round" stroke-linejoin="round"/>
<path d="M401.1 25.45L403 27.15L404.9 25.45" stroke="#e6e6e6" stroke-width="0.9" fill="none" stroke-linecap="round" stroke-linejoin="round"/>
<circle cx="422.200" cy="25.800" r="4.400" fill="#7a7a7a" stroke="#cfcfcf" stroke-width="0.7"/><circle cx="422.200" cy="25.800" r="2.300" stroke="#cfcfcf" stroke-width="0.6" stroke-dasharray="1 0.700"/><circle cx="422.200" cy="25.800" r="0.800" fill="#cfcfcf"/><path d="M418.600 23.600l7.200 4.400M418.600 28l7.200-4.400M422.200 21.600v8.400" stroke="#cfcfcf" stroke-width="0.350"/>
<rect x="440.600" y="22.200" width="7" height="7.600" stroke="#cfcfcf" stroke-width="0.800" stroke-dasharray="1.400 0.900"/>
<path d="M449.9 25.799999999999997L451.4 27.2L452.9 25.799999999999997" stroke="#a0a0a0" stroke-width="0.7" fill="none" stroke-linecap="round" stroke-linejoin="round"/>
<rect x="502.200" y="23.400" width="4.800" height="4.600" stroke="#cfcfcf" stroke-width="0.800"/><path d="M500.400 23.600v-2h2M508.800 23.600v-2h-2M500.400 27.800v2h2M508.800 27.800v2h-2" stroke="#cfcfcf" stroke-width="0.800"/><path d="M500.600 21.800l1.600 1.600M508.600 21.800l-1.600 1.600M500.600 29.600l1.600-1.600M508.600 29.600l-1.600-1.600" stroke="#cfcfcf" stroke-width="0.600"/>
<rect x="518.600" y="22.600" width="5.400" height="4.600" stroke="#bdbdbd" stroke-width="0.700"/><path d="M517.600 21.600h1.600v1.600h-1.600zM523.400 21.600h1.600v1.600h-1.600zM517.600 26.600h1.600v1.600h-1.600z" fill="#bdbdbd"/><path d="M521.400 23.800V30.600L523 29L526.400 29Z" fill="#d8d8d8"/>
<path d="M530.5 25.3L532.2 26.9L533.9000000000001 25.3" stroke="#e6e6e6" stroke-width="0.9" fill="none" stroke-linecap="round" stroke-linejoin="round"/>
<path d="M710 22.400h2.600v2.800H710zM713.800 22.400h2.600v2.800h-2.600zM710 26.400h2.600v2.800H710zM713.800 26.400h2.600v2.800h-2.600z" fill="#d0d0d0"/><path d="M709 25.800h8.400M713.200 21.600v8.400" stroke="#8a8a8a" stroke-width="0.400"/>
<path d="M724 21.800h2.400v2H724zM724 24.800h2.400v2H724zM724 27.800h2.400v2H724z" fill="#d0d0d0"/><path d="M727.400 23H730.400Q732.200 23 732.200 25.200Q732.200 27.400 730.400 27.400H727.400" stroke="#d0d0d0" stroke-width="1"/>
<path d="M736.6999999999999 25.150000000000002L738.4 26.65L740.1 25.150000000000002" stroke="#777" stroke-width="0.7" fill="none" stroke-linecap="round" stroke-linejoin="round"/>
<path d="M751.200 23.800h1.400M751.200 25.800h1.400M751.200 27.800h1.400" stroke="#d0d0d0" stroke-width="1.100"/><path d="M753.600 23.800h4.600M753.600 25.800h4.600M753.600 27.800h4.600" stroke="#d0d0d0" stroke-width="0.900"/>
<path d="M452.800 42.800l3.200 3.200M456 42.800l-3.200 3.200" stroke="#e8e8e8" stroke-width="0.9"/>
<path d="M625.400 38.200v2.600l-1.500-1.300zM627.600 38.200v2.600l-1.500-1.300z" fill="#e0e0e0"/>
<path d="M760.600 38.200v2.600l1.500-1.300zM762.800 38.200v2.600l1.500-1.300z" fill="#e0e0e0"/>
<path d="M616 56.400C616 53.400 619 51.800 622 52.200C625 52.600 626 54.600 625.400 56.400C624.800 58 622.800 57.200 622.400 58.400C622 59.800 620 60 618.400 59.400C616.800 58.800 616 57.800 616 56.400Z" fill="#dcdcdc"/><circle cx="618.400" cy="56.600" r="0.800" fill="#535353"/><circle cx="619.800" cy="54.400" r="0.800" fill="#535353"/><circle cx="622.400" cy="54.200" r="0.800" fill="#535353"/><circle cx="620.400" cy="57.800" r="0.700" fill="#535353"/>
<defs><linearGradient id="cg" x1="0" x2="1" y1="0" y2="1"><stop offset="0" stop-color="#f0f0f0"/><stop offset="1" stop-color="#8a8a8a"/></linearGradient></defs><path d="M617 67.200C621.800 67.600 625.200 71 625.800 76.200H617Z" fill="url(#cg)" stroke="#d8d8d8" stroke-width="0.600"/>
<rect x="616" y="91.400" width="9" height="6.600" fill="#d6d6d6"/><path d="M616 93.800h9M619 91.400v6.600M622 91.400v6.600" stroke="#535353" stroke-width="0.500"/><rect x="619.300" y="94.100" width="2.500" height="1.700" fill="#6a6a6a"/><rect x="622.300" y="92" width="2.300" height="1.600" fill="#6a6a6a"/>
<rect x="618.400" y="109.800" width="4.400" height="5" fill="#dcdcdc"/><path d="M619.400 109.600L618 106.600M620.600 109.600V105.200M621.800 109.600L623.400 106.800" stroke="#dcdcdc" stroke-width="1"/><path d="M622.600 107.200l3 0.600l-2.400 1.400z" fill="#dcdcdc"/>
<circle cx="620.600" cy="122.600" r="2.100" fill="#dcdcdc"/><circle cx="618.600" cy="125.600" r="2.100" fill="#dcdcdc"/><circle cx="622.600" cy="125.600" r="2.100" fill="#dcdcdc"/><path d="M620.600 124.600v4.200M618.800 129.200h3.600" stroke="#dcdcdc" stroke-width="0.900"/>
<path d="M616 146.800h10M616 149.200h10M616 151.600h10" stroke="#dcdcdc" stroke-width="1"/>
<rect x="616.400" y="161.600" width="9" height="6.200" fill="url(#tg)" stroke="#d0d0d0" stroke-width="0.600"/>
<circle cx="619.800" cy="179.400" r="3.200" fill="#d0d0d0"/><circle cx="622" cy="182" r="3.200" fill="#8c8c8c" stroke="#c8c8c8" stroke-width="0.500"/>
<rect x="618.600" y="200.600" width="6.400" height="6.400" stroke="#dcdcdc" stroke-width="0.800"/><circle cx="618.800" cy="206.600" r="2" fill="#535353" stroke="#dcdcdc" stroke-width="0.700"/>
<rect x="617" y="223.400" width="5" height="4.600" fill="#dcdcdc"/><rect x="620" y="226.200" width="5" height="4.600" fill="#535353" stroke="#dcdcdc" stroke-width="0.800"/>
<path d="M617 245v9.600" stroke="#dcdcdc" stroke-width="0.900"/><rect x="618.200" y="246.200" width="4.400" height="2.800" fill="#dcdcdc"/><rect x="618.200" y="250.600" width="7" height="2.800" fill="#dcdcdc"/>
<path d="M602.0999999999999 57.85L603.8 56.75000000000001L605.5 57.85" stroke="#c8c8c8" stroke-width="0.8" fill="none" stroke-linecap="round" stroke-linejoin="round"/>
<path d="M602.0999999999999 416.15000000000003L603.8 417.65L605.5 416.15000000000003" stroke="#c8c8c8" stroke-width="0.8" fill="none" stroke-linecap="round" stroke-linejoin="round"/>
<path d="M593.35 425.1L594.85 426.8L593.35 428.5" stroke="#c8c8c8" stroke-width="0.8" fill="none" stroke-linecap="round" stroke-linejoin="round"/>
<path d="M288.45 424.90000000000003L287.35 426.6L288.45 428.3" stroke="#c8c8c8" stroke-width="0.8" fill="none" stroke-linecap="round" stroke-linejoin="round"/>
<path d="M278 424.400v4.600l3-2.300z" fill="#e0e0e0"/>
<path d="M74.89999999999999 426.95000000000005L76.6 428.45L78.3 426.95000000000005" stroke="#e6e6e6" stroke-width="0.9" fill="none" stroke-linecap="round" stroke-linejoin="round"/>
<path d="M131.3 426.95000000000005L133 428.45L134.7 426.95000000000005" stroke="#e6e6e6" stroke-width="0.9" fill="none" stroke-linecap="round" stroke-linejoin="round"/>
<path d="M88.400 424.800v4.600" stroke="#e0e0e0" stroke-width="0.900"/><path d="M92 424.800v4.600l-3-2.300z" fill="#e0e0e0"/><path d="M100 424.800v4.600l-3-2.300z" fill="#e0e0e0"/>
<path d="M144 424.800v4.600l3-2.300z" fill="#737373"/><path d="M153 424.800v4.600l3-2.300z" fill="#737373"/><path d="M156.800 424.800v4.600" stroke="#737373" stroke-width="0.900"/>
<path d="M639.0 67.5L640.6 69.3L644.0 64.89999999999999" stroke="#e8e8e8" stroke-width="1.1" fill="none"/>
<path d="M639.0 78.1L640.6 79.89999999999999L644.0 75.49999999999999" stroke="#e8e8e8" stroke-width="1.1" fill="none"/>
<path d="M639.0 88.7L640.6 90.5L644.0 86.1" stroke="#e8e8e8" stroke-width="1.1" fill="none"/>
<path d="M639.0 99.3L640.6 101.1L644.0 96.69999999999999" stroke="#e8e8e8" stroke-width="1.1" fill="none"/>
<path d="M639.0 109.89999999999999L640.6 111.69999999999999L644.0 107.29999999999998" stroke="#e8e8e8" stroke-width="1.1" fill="none"/>
<rect x="650.800" y="64.600" width="5" height="4.600" rx="0.600" stroke="#d8d8d8" stroke-width="0.700"/><path d="M652 66.400h2.600" stroke="#d8d8d8" stroke-width="0.700"/>
<rect x="650.800" y="107.400" width="5" height="4.400" rx="0.600" stroke="#d8d8d8" stroke-width="0.700"/><path d="M651 108.400h4.600" stroke="#d8d8d8" stroke-width="0.500"/>
<path d="M663.5 66.5L665.4 68.10000000000001L667.3 66.5" stroke="#e6e6e6" stroke-width="0.9" fill="none" stroke-linecap="round" stroke-linejoin="round"/>
<path d="M673.400 64.600h2.600l0.600 0.800h4.200v4.800h-7.400z" fill="#d6d6d6"/>
<path d="M676.3 75.99999999999999L677.9000000000001 77.89999999999999L676.3 79.8" stroke="#e6e6e6" stroke-width="0.9" fill="none" stroke-linecap="round" stroke-linejoin="round"/>
<path d="M676.3 86.6L677.9000000000001 88.5L676.3 90.4" stroke="#e6e6e6" stroke-width="0.9" fill="none" stroke-linecap="round" stroke-linejoin="round"/>
<path d="M676.3 97.19999999999999L677.9000000000001 99.1L676.3 101.0" stroke="#e6e6e6" stroke-width="0.9" fill="none" stroke-linecap="round" stroke-linejoin="round"/>
<path d="M676.3 107.79999999999998L677.9000000000001 109.69999999999999L676.3 111.6" stroke="#e6e6e6" stroke-width="0.9" fill="none" stroke-linecap="round" stroke-linejoin="round"/>
<path d="M759.0 65.25L760.8 64.14999999999999L762.5999999999999 65.25" stroke="#bdbdbd" stroke-width="0.8" fill="none" stroke-linecap="round" stroke-linejoin="round"/>
<path d="M759.0 113.75L760.8 115.25000000000001L762.5999999999999 113.75" stroke="#bdbdbd" stroke-width="0.8" fill="none" stroke-linecap="round" stroke-linejoin="round"/>
<rect x="673.400" y="121" width="4.600" height="4.600" fill="#777"/><circle cx="689.800" cy="123.400" r="2.500" fill="#777"/><path d="M702.400 121v4.800l4-2.400z" fill="#777"/>
<path d="M715.400 121h2.600l0.600 0.800h4.400v4.200h-7.600z" fill="#d6d6d6"/>
<path d="M731.600 120.800h5.200v5.200h-3.400l-1.800-1.800z" fill="#d6d6d6"/><path d="M731.600 124.200h1.800v1.800" stroke="#535353" stroke-width="0.500"/>
<path d="M745.800 122h5.200l-0.500 4.600h-4.200zM745.200 121.200h6.400M747.400 120.400h2" stroke="#6e6e6e" stroke-width="0.800"/>
<path d="M638.8 188.2Q642 184.6 645.2 188.2Q642 191.79999999999998 638.8 188.2Z" stroke="#d8d8d8" stroke-width="0.700" fill="none"/><circle cx="642" cy="188.2" r="1.200" fill="#d8d8d8"/>
<path d="M638.8 202.2Q642 198.6 645.2 202.2Q642 205.79999999999998 638.8 202.2Z" stroke="#d8d8d8" stroke-width="0.700" fill="none"/><circle cx="642" cy="202.2" r="1.200" fill="#d8d8d8"/>
<path d="M653.9 186.29999999999998L655.5000000000001 188.2L653.9 190.1" stroke="#e6e6e6" stroke-width="0.9" fill="none" stroke-linecap="round" stroke-linejoin="round"/>
<path d="M653.9 200.29999999999998L655.5000000000001 202.2L653.9 204.1" stroke="#e6e6e6" stroke-width="0.9" fill="none" stroke-linecap="round" stroke-linejoin="round"/>
<path d="M688.800 192.400L696.800 183.800" stroke="#f00014" stroke-width="1.100"/>
<path d="M759.0 170.65L760.8 169.54999999999998L762.5999999999999 170.65" stroke="#bdbdbd" stroke-width="0.8" fill="none" stroke-linecap="round" stroke-linejoin="round"/>
<path d="M759.0 205.95L760.8 207.45L762.5999999999999 205.95" stroke="#bdbdbd" stroke-width="0.8" fill="none" stroke-linecap="round" stroke-linejoin="round"/>
<rect x="639.400" y="213.200" width="5.400" height="5.400" stroke="#dcdcdc" stroke-width="0.900"/>
<rect x="654" y="213" width="5.800" height="5.800" fill="#dcdcdc"/><rect x="655.200" y="214.200" width="3.400" height="3.400" fill="#6a6a6a"/>
<circle cx="719.200" cy="216" r="2.600" stroke="#dcdcdc" stroke-width="0.900"/><path d="M717.400 214.200l3.600 3.600" stroke="#dcdcdc" stroke-width="0.900"/>
<path d="M731.400 213.400h5v5h-3.200l-1.800-1.800z" fill="#747474"/>
<path d="M745.800 214.400h5.200l-0.500 4.600h-4.200zM745.200 213.600h6.400M747.400 212.800h2" stroke="#6e6e6e" stroke-width="0.800"/>
<path d="M638.4 247.78999999999996Q641.6 244.18999999999997 644.8000000000001 247.78999999999996Q641.6 251.38999999999996 638.4 247.78999999999996Z" stroke="#d8d8d8" stroke-width="0.700" fill="none"/><circle cx="641.6" cy="247.78999999999996" r="1.200" fill="#d8d8d8"/>
<path d="M638.4 259.57Q641.6 255.97 644.8000000000001 259.57Q641.6 263.17 638.4 259.57Z" stroke="#d8d8d8" stroke-width="0.700" fill="none"/><circle cx="641.6" cy="259.57" r="1.200" fill="#d8d8d8"/>
<path d="M638.4 271.34999999999997Q641.6 267.74999999999994 644.8000000000001 271.34999999999997Q641.6 274.95 638.4 271.34999999999997Z" stroke="#d8d8d8" stroke-width="0.700" fill="none"/><circle cx="641.6" cy="271.34999999999997" r="1.200" fill="#d8d8d8"/>
<path d="M638.4 283.12999999999994Q641.6 279.5299999999999 644.8000000000001 283.12999999999994Q641.6 286.72999999999996 638.4 283.12999999999994Z" stroke="#d8d8d8" stroke-width="0.700" fill="none"/><circle cx="641.6" cy="283.12999999999994" r="1.200" fill="#d8d8d8"/>
<path d="M638.4 294.90999999999997Q641.6 291.30999999999995 644.8000000000001 294.90999999999997Q641.6 298.51 638.4 294.90999999999997Z" stroke="#d8d8d8" stroke-width="0.700" fill="none"/><circle cx="641.6" cy="294.90999999999997" r="1.200" fill="#d8d8d8"/>
<path d="M638.4 306.68999999999994Q641.6 303.0899999999999 644.8000000000001 306.68999999999994Q641.6 310.28999999999996 638.4 306.68999999999994Z" stroke="#d8d8d8" stroke-width="0.700" fill="none"/><circle cx="641.6" cy="306.68999999999994" r="1.200" fill="#d8d8d8"/>
<path d="M638.4 318.46999999999997Q641.6 314.86999999999995 644.8000000000001 318.46999999999997Q641.6 322.07 638.4 318.46999999999997Z" stroke="#d8d8d8" stroke-width="0.700" fill="none"/><circle cx="641.6" cy="318.46999999999997" r="1.200" fill="#d8d8d8"/>
<path d="M638.4 330.24999999999994Q641.6 326.6499999999999 644.8000000000001 330.24999999999994Q641.6 333.84999999999997 638.4 330.24999999999994Z" stroke="#d8d8d8" stroke-width="0.700" fill="none"/><circle cx="641.6" cy="330.24999999999994" r="1.200" fill="#d8d8d8"/>
<path d="M638.4 342.03Q641.6 338.42999999999995 644.8000000000001 342.03Q641.6 345.63 638.4 342.03Z" stroke="#d8d8d8" stroke-width="0.700" fill="none"/><circle cx="641.6" cy="342.03" r="1.200" fill="#d8d8d8"/>
<path d="M638.4 353.80999999999995Q641.6 350.2099999999999 644.8000000000001 353.80999999999995Q641.6 357.40999999999997 638.4 353.80999999999995Z" stroke="#d8d8d8" stroke-width="0.700" fill="none"/><circle cx="641.6" cy="353.80999999999995" r="1.200" fill="#d8d8d8"/>
<path d="M638.4 365.59Q641.6 361.98999999999995 644.8000000000001 365.59Q641.6 369.19 638.4 365.59Z" stroke="#d8d8d8" stroke-width="0.700" fill="none"/><circle cx="641.6" cy="365.59" r="1.200" fill="#d8d8d8"/>
<path d="M638.4 377.36999999999995Q641.6 373.7699999999999 644.8000000000001 377.36999999999995Q641.6 380.96999999999997 638.4 377.36999999999995Z" stroke="#d8d8d8" stroke-width="0.700" fill="none"/><circle cx="641.6" cy="377.36999999999995" r="1.200" fill="#d8d8d8"/>
<path d="M638.4 389.1499999999999Q641.6 385.5499999999999 644.8000000000001 389.1499999999999Q641.6 392.74999999999994 638.4 389.1499999999999Z" stroke="#d8d8d8" stroke-width="0.700" fill="none"/><circle cx="641.6" cy="389.1499999999999" r="1.200" fill="#d8d8d8"/>
<path d="M638.4 400.92999999999995Q641.6 397.3299999999999 644.8000000000001 400.92999999999995Q641.6 404.53 638.4 400.92999999999995Z" stroke="#d8d8d8" stroke-width="0.700" fill="none"/><circle cx="641.6" cy="400.92999999999995" r="1.200" fill="#d8d8d8"/>
<path d="M638.4 412.71Q641.6 409.10999999999996 644.8000000000001 412.71Q641.6 416.31 638.4 412.71Z" stroke="#d8d8d8" stroke-width="0.700" fill="none"/><circle cx="641.6" cy="412.71" r="1.200" fill="#d8d8d8"/>
<path d="M667.1 247.29L669 248.88999999999996L670.9 247.29" stroke="#e6e6e6" stroke-width="0.9" fill="none" stroke-linecap="round" stroke-linejoin="round"/>
<circle cx="743.200" cy="247.78999999999996" r="1.900" stroke="#d6d6d6" stroke-width="0.700"/>
<circle cx="743.200" cy="259.57" r="2.600" stroke="#d6d6d6" stroke-width="0.600"/><circle cx="743.200" cy="259.57" r="1.500" stroke="#d6d6d6" stroke-width="0.600"/>
<circle cx="743.200" cy="271.34999999999997" r="1.900" stroke="#d6d6d6" stroke-width="0.700"/>
<circle cx="743.200" cy="283.12999999999994" r="1.900" fill="#9a9a9a" stroke="#d6d6d6" stroke-width="0.600"/>
<circle cx="743.200" cy="294.90999999999997" r="1.900" stroke="#d6d6d6" stroke-width="0.700"/>
<circle cx="743.200" cy="306.68999999999994" r="1.900" stroke="#d6d6d6" stroke-width="0.700"/>
<circle cx="743.200" cy="318.46999999999997" r="1.900" stroke="#d6d6d6" stroke-width="0.700"/>
<circle cx="743.200" cy="330.24999999999994" r="1.900" stroke="#d6d6d6" stroke-width="0.700"/>
<circle cx="743.200" cy="342.03" r="1.900" stroke="#d6d6d6" stroke-width="0.700"/>
<circle cx="743.200" cy="353.80999999999995" r="1.900" stroke="#d6d6d6" stroke-width="0.700"/>
<circle cx="743.200" cy="365.59" r="1.900" stroke="#d6d6d6" stroke-width="0.700"/>
<circle cx="743.200" cy="377.36999999999995" r="1.900" stroke="#d6d6d6" stroke-width="0.700"/>
<circle cx="743.200" cy="389.1499999999999" r="1.900" stroke="#d6d6d6" stroke-width="0.700"/>
<circle cx="743.200" cy="400.92999999999995" r="1.900" stroke="#d6d6d6" stroke-width="0.700"/>
<circle cx="743.200" cy="412.71" r="1.900" fill="#9a9a9a" stroke="#d6d6d6" stroke-width="0.600"/>
<circle cx="751" cy="247.78999999999996" r="1.500" fill="#4f7cf0"/><path d="M756 242.29999999999998v3.400l-3.400-3.400z" fill="#e8e8e8"/>
<rect x="749.400" y="257.97" width="3.400" height="3.400" fill="#c4c4c4" stroke="#222" stroke-width="0.600"/>
<path d="M759.0 246.05L760.8 244.95L762.5999999999999 246.05" stroke="#bdbdbd" stroke-width="0.8" fill="none" stroke-linecap="round" stroke-linejoin="round"/>
<path d="M759.0 415.95000000000005L760.8 417.45L762.5999999999999 415.95000000000005" stroke="#bdbdbd" stroke-width="0.8" fill="none" stroke-linecap="round" stroke-linejoin="round"/>
<path d="M675.400 422.400h-2.600v6h6v-2.600M676.400 421.600h3v3M679.200 421.800l-3.600 3.600" stroke="#dcdcdc" stroke-width="0.800"/>
<circle cx="690.800" cy="424.600" r="2.300" stroke="#dcdcdc" stroke-width="0.900"/><path d="M689.200 426.400l-2.400 2.600" stroke="#dcdcdc" stroke-width="1"/>
<rect x="702" y="422.600" width="3.600" height="3.600" stroke="#6e6e6e" stroke-width="0.600"/><rect x="703.800" y="424.400" width="3.600" height="3.600" fill="#6e6e6e"/>
<path d="M716 423h2.400v1.600H716zM720 423.400h2.800v4.600h-2.800z" fill="#6e6e6e"/><path d="M717.200 424.600v2.200h2.600" stroke="#6e6e6e" stroke-width="0.600"/>
<path d="M731.400 422h5.200v5.600h-3.400l-1.800-1.800z" fill="#dcdcdc"/>
<path d="M745.800 423.600h5.200l-0.500 5h-4.200zM745.200 422.800h6.400M747.400 422h2" stroke="#d0d0d0" stroke-width="0.900"/>
<path d="M55.68 57.6V62M60.73 59.2V62M65.79 59.2V62M70.84 59.2V62M75.90 52.5V62M80.96 59.2V62M86.01 59.2V62M91.07 59.2V62M96.12 57.6V62M101.18 59.2V62M106.24 59.2V62M111.29 59.2V62M116.35 52.5V62M121.41 59.2V62M126.46 59.2V62M131.52 59.2V62M136.58 57.6V62M141.63 59.2V62M146.69 59.2V62M151.74 59.2V62M156.80 52.5V62M161.86 59.2V62M166.91 59.2V62M171.97 59.2V62M177.03 57.6V62M182.08 59.2V62M187.14 59.2V62M192.19 59.2V62M197.25 52.5V62M202.31 59.2V62M207.36 59.2V62M212.42 59.2V62M217.48 57.6V62M222.53 59.2V62M227.59 59.2V62M232.64 59.2V62M237.70 52.5V62M242.76 59.2V62M247.81 59.2V62M252.87 59.2V62M257.93 57.6V62M262.98 59.2V62M268.04 59.2V62M273.09 59.2V62M278.15 52.5V62M283.21 59.2V62M288.26 59.2V62M293.32 59.2V62M298.38 57.6V62M303.43 59.2V62M308.49 59.2V62M313.54 59.2V62M318.60 52.5V62M323.66 59.2V62M328.71 59.2V62M333.77 59.2V62M338.83 57.6V62M343.88 59.2V62M348.94 59.2V62M353.99 59.2V62M359.05 52.5V62M364.11 59.2V62M369.16 59.2V62M374.22 59.2V62M379.27 57.6V62M384.33 59.2V62M389.39 59.2V62M394.44 59.2V62M399.50 52.5V62M404.56 59.2V62M409.61 59.2V62M414.67 59.2V62M419.73 57.6V62M424.78 59.2V62M429.84 59.2V62M434.89 59.2V62M439.95 52.5V62M445.01 59.2V62M450.06 59.2V62M455.12 59.2V62M460.18 57.6V62M465.23 59.2V62M470.29 59.2V62M475.34 59.2V62M480.40 52.5V62M485.46 59.2V62M490.51 59.2V62M495.57 59.2V62M500.62 57.6V62M505.68 59.2V62M510.74 59.2V62M515.79 59.2V62M520.85 52.5V62M525.91 59.2V62M530.96 59.2V62M536.02 59.2V62M541.08 57.6V62M546.13 59.2V62M551.19 59.2V62M556.24 59.2V62M561.30 52.5V62M566.36 59.2V62M571.41 59.2V62M576.47 59.2V62M581.53 57.6V62M586.58 59.2V62M591.64 59.2V62M596.69 59.2V62" stroke="#808080" stroke-width="0.55"/>
<path d="M48.6 66.84H51M42.8 71.90H51M48.6 76.96H51M48.6 82.01H51M48.6 87.07H51M47 92.12H51M48.6 97.18H51M48.6 102.24H51M48.6 107.29H51M42.8 112.35H51M48.6 117.41H51M48.6 122.46H51M48.6 127.52H51M47 132.58H51M48.6 137.63H51M48.6 142.69H51M48.6 147.74H51M42.8 152.80H51M48.6 157.86H51M48.6 162.91H51M48.6 167.97H51M47 173.03H51M48.6 178.08H51M48.6 183.14H51M48.6 188.19H51M42.8 193.25H51M48.6 198.31H51M48.6 203.36H51M48.6 208.42H51M47 213.48H51M48.6 218.53H51M48.6 223.59H51M48.6 228.64H51M42.8 233.70H51M48.6 238.76H51M48.6 243.81H51M48.6 248.87H51M47 253.93H51M48.6 258.98H51M48.6 264.04H51M48.6 269.09H51M42.8 274.15H51M48.6 279.21H51M48.6 284.26H51M48.6 289.32H51M47 294.38H51M48.6 299.43H51M48.6 304.49H51M48.6 309.54H51M42.8 314.60H51M48.6 319.66H51M48.6 324.71H51M48.6 329.77H51M47 334.83H51M48.6 339.88H51M48.6 344.94H51M48.6 349.99H51M42.8 355.05H51M48.6 360.11H51M48.6 365.16H51M48.6 370.22H51M47 375.27H51M48.6 380.33H51M48.6 385.39H51M48.6 390.44H51M42.8 395.50H51M48.6 400.56H51M48.6 405.61H51M48.6 410.67H51M47 415.73H51" stroke="#808080" stroke-width="0.55"/>
<path d="M47 53v8M43.400 57h7.400" stroke="#9a9a9a" stroke-width="0.5" stroke-dasharray="0.8 0.6"/>
<path d="M42.500 62H608M51 52V421" stroke="#353535" stroke-width="0.6"/></svg>
<div style="left:144px;top:15.5px;width:128.5px;height:248.5px;background:#f0f0f0;border:1px solid #9a9a9a;box-shadow:1.5px 1.5px 2px rgba(0,0,0,.45);"></div>
<span class="t" style="top:15px;font-size:6.6px;line-height:9px;color:#a0a0a0;left:155.70px;transform-origin:0 50%;transform:scaleX(0.992);">Apply Last Effect</span>
<span class="t" style="top:15px;font-size:6.6px;line-height:9px;color:#a0a0a0;right:508.60px;transform-origin:100% 50%;">Shift+Ctrl+E</span>
<span class="t" style="top:26px;font-size:6.6px;line-height:9px;color:#a0a0a0;left:155.70px;transform-origin:0 50%;transform:scaleX(0.966);">Last Effect</span>
<span class="t" style="top:26px;font-size:6.6px;line-height:9px;color:#a0a0a0;right:508.60px;transform-origin:100% 50%;transform:scaleX(1.039);">Alt+Shift+Ctrl+E</span>
<div style="left:146.5px;top:37.2px;width:124px;height:0.8px;background:#c4c4c4;"></div>
<span class="t" style="top:42px;font-size:6.6px;line-height:9px;color:#000;left:155.70px;transform-origin:0 50%;transform:scaleX(0.986);">Document Raster Effects Settings...</span>
<div style="left:146.5px;top:53.2px;width:124px;height:0.8px;background:#c4c4c4;"></div>
<span class="t" style="top:57px;font-size:6.6px;line-height:9px;color:#a0a0a0;left:155.70px;transform-origin:0 50%;">Illustrator Effects</span>
<div style="left:145.5px;top:66.5px;width:126px;height:9px;background:#0a78d7;"></div>
<span class="t" style="top:67px;font-size:6.6px;line-height:9px;color:#dce9ff;left:162.00px;transform-origin:0 50%;transform:scaleX(0.830);text-shadow:0.4px 0.4px 0 #082560,-0.3px -0.3px 0 #082560;">3D</span>
<div style="left:266px;top:69.3px;width:0;height:0;border-left:2.4px solid #fff;border-top:2px solid transparent;border-bottom:2px solid transparent;"></div>
<span class="t" style="top:76px;font-size:6.6px;line-height:9px;color:#000;left:162.00px;transform-origin:0 50%;transform:scaleX(1.012);">Convert to Shape</span>
<div style="left:266px;top:78.80px;width:0;height:0;border-left:2.4px solid #000;border-top:2px solid transparent;border-bottom:2px solid transparent;"></div>
<span class="t" style="top:85px;font-size:6.6px;line-height:9px;color:#000;left:162.00px;transform-origin:0 50%;">Crop Marks</span>
<span class="t" style="top:94px;font-size:6.6px;line-height:9px;color:#000;left:162.00px;transform-origin:0 50%;transform:scaleX(1.029);">Distort &amp; Transform</span>
<div style="left:266px;top:96.90px;width:0;height:0;border-left:2.4px solid #000;border-top:2px solid transparent;border-bottom:2px solid transparent;"></div>
<span class="t" style="top:103px;font-size:6.6px;line-height:9px;color:#000;left:162.00px;transform-origin:0 50%;transform:scaleX(0.994);">Path</span>
<div style="left:266px;top:106.00px;width:0;height:0;border-left:2.4px solid #000;border-top:2px solid transparent;border-bottom:2px solid transparent;"></div>
<span class="t" style="top:112px;font-size:6.6px;line-height:9px;color:#000;left:162.00px;transform-origin:0 50%;transform:scaleX(1.030);">Pathfinder</span>
<div style="left:266px;top:115.00px;width:0;height:0;border-left:2.4px solid #000;border-top:2px solid transparent;border-bottom:2px solid transparent;"></div>
<span class="t" style="top:121px;font-size:6.6px;line-height:9px;color:#000;left:162.00px;transform-origin:0 50%;transform:scaleX(0.914);">Rasterize...</span>
<span class="t" style="top:130px;font-size:6.6px;line-height:9px;color:#000;left:162.00px;transform-origin:0 50%;">Stylize</span>
<div style="left:266px;top:133.10px;width:0;height:0;border-left:2.4px solid #000;border-top:2px solid transparent;border-bottom:2px solid transparent;"></div>
<span class="t" style="top:139px;font-size:6.6px;line-height:9px;color:#000;left:162.00px;transform-origin:0 50%;transform:scaleX(0.919);">SVG Filters</span>
<div style="left:266px;top:142.10px;width:0;height:0;border-left:2.4px solid #000;border-top:2px solid transparent;border-bottom:2px solid transparent;"></div>
<span class="t" style="top:148px;font-size:6.6px;line-height:9px;color:#000;left:162.00px;transform-origin:0 50%;transform:scaleX(1.031);">Warp</span>
<div style="left:266px;top:151.10px;width:0;height:0;border-left:2.4px solid #000;border-top:2px solid transparent;border-bottom:2px solid transparent;"></div>
<div style="left:146.5px;top:159.2px;width:124px;height:0.8px;background:#c4c4c4;"></div>
<span class="t" style="top:163px;font-size:6.6px;line-height:9px;color:#a0a0a0;left:155.70px;transform-origin:0 50%;transform:scaleX(1.010);">Photoshop Effects</span>
<span class="t" style="top:173px;font-size:6.6px;line-height:9px;color:#000;left:162.00px;transform-origin:0 50%;">Effect Gallery...</span>
<span class="t" style="top:182px;font-size:6.6px;line-height:9px;color:#000;left:162.00px;transform-origin:0 50%;transform:scaleX(1.035);">Artistic</span>
<div style="left:266px;top:184.60px;width:0;height:0;border-left:2.4px solid #000;border-top:2px solid transparent;border-bottom:2px solid transparent;"></div>
<span class="t" style="top:191px;font-size:6.6px;line-height:9px;color:#000;left:162.00px;transform-origin:0 50%;transform:scaleX(0.980);">Blur</span>
<div style="left:266px;top:193.70px;width:0;height:0;border-left:2.4px solid #000;border-top:2px solid transparent;border-bottom:2px solid transparent;"></div>
<span class="t" style="top:200px;font-size:6.6px;line-height:9px;color:#000;left:162.00px;transform-origin:0 50%;transform:scaleX(0.965);">Brush Strokes</span>
<div style="left:266px;top:202.60px;width:0;height:0;border-left:2.4px solid #000;border-top:2px solid transparent;border-bottom:2px solid transparent;"></div>
<span class="t" style="top:209px;font-size:6.6px;line-height:9px;color:#000;left:162.00px;transform-origin:0 50%;transform:scaleX(1.023);">Distort</span>
<div style="left:266px;top:211.60px;width:0;height:0;border-left:2.4px solid #000;border-top:2px solid transparent;border-bottom:2px solid transparent;"></div>
<span class="t" style="top:218px;font-size:6.6px;line-height:9px;color:#000;left:162.00px;transform-origin:0 50%;transform:scaleX(0.980);">Pixelate</span>
<div style="left:266px;top:220.60px;width:0;height:0;border-left:2.4px solid #000;border-top:2px solid transparent;border-bottom:2px solid transparent;"></div>
<span class="t" style="top:227px;font-size:6.6px;line-height:9px;color:#000;left:162.00px;transform-origin:0 50%;transform:scaleX(0.966);">Sketch</span>
<div style="left:266px;top:229.60px;width:0;height:0;border-left:2.4px solid #000;border-top:2px solid transparent;border-bottom:2px solid transparent;"></div>
<span class="t" style="top:236px;font-size:6.6px;line-height:9px;color:#000;left:162.00px;transform-origin:0 50%;">Stylize</span>
<div style="left:266px;top:238.70px;width:0;height:0;border-left:2.4px solid #000;border-top:2px solid transparent;border-bottom:2px solid transparent;"></div>
<span class="t" style="top:245px;font-size:6.6px;line-height:9px;color:#000;left:162.00px;transform-origin:0 50%;transform:scaleX(0.993);">Texture</span>
<div style="left:266px;top:247.70px;width:0;height:0;border-left:2.4px solid #000;border-top:2px solid transparent;border-bottom:2px solid transparent;"></div>
<span class="t" style="top:254px;font-size:6.6px;line-height:9px;color:#000;left:162.00px;transform-origin:0 50%;transform:scaleX(1.014);">Video</span>
<div style="left:266px;top:256.70px;width:0;height:0;border-left:2.4px solid #000;border-top:2px solid transparent;border-bottom:2px solid transparent;"></div>
<div style="left:270.8px;top:66.2px;width:102.2px;height:38.5px;background:#f0f0f0;border:1px solid #9a9a9a;box-shadow:1.5px 1.5px 2px rgba(0,0,0,.45);"></div>
<span class="t" style="top:69px;font-size:6.6px;line-height:9px;color:#000;left:290.00px;transform-origin:0 50%;transform:scaleX(0.984);">Extrude &amp; Bevel...</span>
<span class="t" style="top:82px;font-size:6.6px;line-height:9px;color:#000;left:290.00px;transform-origin:0 50%;transform:scaleX(0.971);">Revolve...</span>
<span class="t" style="top:94px;font-size:6.6px;line-height:9px;color:#000;left:290.00px;transform-origin:0 50%;transform:scaleX(0.982);">Rotate...</span>
<div style="left:142.2px;top:64.6px;width:130.2px;height:13px;background:transparent;border:3.4px solid #e6000f;border-radius:2px;"></div>
<div style="left:270.4px;top:77.6px;width:104px;height:16px;background:transparent;border:3.4px solid #e6000f;border-radius:1.5px;"></div>
<svg width="768" height="432" viewBox="0 0 768 432">
<defs><linearGradient id="ag" x1="0" y1="0" x2="1" y2="1"><stop offset="0" stop-color="#ff1a1a"/><stop offset="1" stop-color="#d60000"/></linearGradient></defs>
<path d="M81 40 L120.5 15.3 L113.2 11.6 Q110.6 9.6 114 8.6 L143.2 10.2 Q146 10.6 144.6 12.8 L128.3 36.2 Q126.4 38 125 36.2 L122.3 33.4 L124.3 28.6 Z" fill="url(#ag)" stroke="#c40000" stroke-width="0.4" stroke-linejoin="round"/>
</svg>
</div></body></html>
